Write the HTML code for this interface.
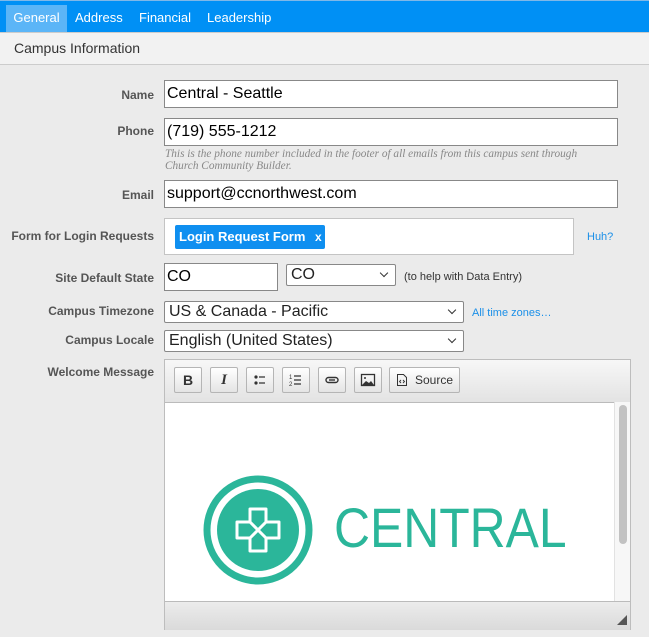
<!DOCTYPE html>
<html><head><style>
body{margin:0;width:649px;height:637px;background:#ebebeb;font-family:"Liberation Sans",Arial,sans-serif;position:relative;overflow:hidden}
.a{position:absolute}
.nav{left:0;top:0;width:649px;height:32px;background:#0090f5;border-top:1px solid #7fb8e8;box-sizing:border-box}
.tab{top:5px;height:27px;line-height:26px;color:#fff;font-size:13px}
.sub{left:0;top:32px;width:649px;height:33px;background:#f2f2f2;border-top:1px solid #ccc;border-bottom:1px solid #ccc;box-sizing:border-box;font-size:14px;color:#333;line-height:31px;padding-left:14px}
.lb{right:495px;font-size:12px;font-weight:bold;color:#555;text-align:right;white-space:nowrap}
.in{background:#fff;border:1px solid #888;box-sizing:border-box;font-size:16px;color:#000;padding-left:2px;line-height:25px}
.sel{background:#fff;border:1px solid #888;border-radius:2px;box-sizing:border-box;font-size:16px;color:#222;padding-left:4px;line-height:20px}
.sel:after{content:"";position:absolute;right:8px;top:5px;width:5px;height:5px;border-right:1.5px solid #333;border-bottom:1.5px solid #333;transform:rotate(45deg)}
.btn{top:367px;height:26px;width:28px;border:1px solid #b5b5b5;border-radius:2px;background:linear-gradient(#fff,#e4e4e4);box-sizing:border-box}
</style></head><body>
<div class="a nav"></div>
<div class="a tab" style="left:6px;width:61px;background:#5bb5f7;text-align:center">General</div>
<div class="a tab" style="left:75px">Address</div>
<div class="a tab" style="left:139px">Financial</div>
<div class="a tab" style="left:207px">Leadership</div>
<div class="a sub">Campus Information</div>

<div class="a lb" style="top:88px">Name</div>
<div class="a in" style="left:164px;top:80px;width:454px;height:28px">Central - Seattle</div>
<div class="a lb" style="top:124px">Phone</div>
<div class="a in" style="left:164px;top:118px;width:454px;height:28px">(719) 555-1212</div>
<div class="a" style="left:165px;top:148px;font-family:'Liberation Serif',serif;font-style:italic;font-size:11.3px;color:#888;line-height:12px;width:450px">This is the phone number included in the footer of all emails from this campus sent through<br>Church Community Builder.</div>
<div class="a lb" style="top:188px">Email</div>
<div class="a in" style="left:164px;top:180px;width:454px;height:28px">support@ccnorthwest.com</div>

<div class="a lb" style="top:229px">Form for Login Requests</div>
<div class="a" style="left:164px;top:218px;width:410px;height:37px;background:#fff;border:1px solid #c4c4c4;box-sizing:border-box"></div>
<div class="a" style="left:175px;top:225px;width:150px;height:24px;background:#0f8ff0;border-radius:2px;color:#fff;font-weight:bold;font-size:13px;line-height:23px;padding-left:4px;box-sizing:border-box">Login Request Form <span style="margin-left:6px;font-size:12px">x</span></div>
<div class="a" style="left:587px;top:231px;font-size:11px;color:#1a8fe8">Huh?</div>

<div class="a lb" style="top:271px">Site Default State</div>
<div class="a in" style="left:164px;top:263px;width:114px;height:28px">CO</div>
<div class="a sel" style="left:286px;top:264px;width:110px;height:22px">CO</div>
<div class="a" style="left:404px;top:271px;font-size:11px;color:#333">(to help with Data Entry)</div>

<div class="a lb" style="top:304px">Campus Timezone</div>
<div class="a sel" style="left:164px;top:301px;width:300px;height:22px">US &amp; Canada - Pacific</div>
<div class="a" style="left:472px;top:307px;font-size:11px;color:#1a8fe8">All time zones…</div>
<div class="a lb" style="top:333px">Campus Locale</div>
<div class="a sel" style="left:164px;top:330px;width:300px;height:22px">English (United States)</div>

<div class="a lb" style="top:365px">Welcome Message</div>
<div class="a" style="left:164px;top:359px;width:467px;height:271px;border:1px solid #bdbdbd;box-sizing:border-box;background:#fff"></div>
<div class="a" style="left:165px;top:360px;width:465px;height:42px;background:linear-gradient(#f7f7f7,#e3e3e3);border-bottom:1px solid #bbb"></div>
<div class="a btn" style="left:174px;font-weight:bold;font-size:14px;text-align:center;line-height:24px;color:#333">B</div>
<div class="a btn" style="left:210px;font-family:'Liberation Serif',serif;font-style:italic;font-weight:bold;font-size:15px;text-align:center;line-height:24px;color:#333">I</div>
<div class="a btn" style="left:246px"><svg width="26" height="24"><circle cx="9" cy="9" r="1.6" fill="#333"/><circle cx="9" cy="15" r="1.6" fill="#333"/><path d="M12 9h6M12 15h6" stroke="#333" stroke-width="1.3"/></svg></div>
<div class="a btn" style="left:282px"><svg width="26" height="24"><text x="6" y="11" font-size="6" fill="#333" font-family="Liberation Sans">1</text><text x="6" y="18" font-size="6" fill="#333" font-family="Liberation Sans">2</text><path d="M11 8h7M11 12h7M11 16h7" stroke="#333" stroke-width="1.2"/></svg></div>
<div class="a btn" style="left:318px"><svg width="26" height="24"><rect x="7" y="9.5" width="12" height="5" rx="2.5" fill="none" stroke="#333" stroke-width="1.4"/><path d="M10 12h6" stroke="#333" stroke-width="1.4"/></svg></div>
<div class="a btn" style="left:354px"><svg width="26" height="24"><rect x="6.5" y="6.5" width="13" height="11" fill="none" stroke="#333" stroke-width="1.3"/><path d="M7 17l4-4 3 2 2-2 3 4z" fill="#333"/><circle cx="10" cy="10" r="1" fill="#333"/></svg></div>
<div class="a btn" style="left:389px;width:71px;font-size:12px;color:#333;line-height:24px"><svg class="a" style="left:6px;top:5px" width="12" height="14"><path d="M1.5 1.5h6l3 3v8h-9z" fill="none" stroke="#333" stroke-width="1"/><path d="M5 7l-1.5 1.5L5 10M7 7l1.5 1.5L7 10" fill="none" stroke="#333" stroke-width=".9"/></svg><span style="margin-left:25px">Source</span></div>

<div class="a" style="left:614px;top:402px;width:15px;height:199px;background:#f7f7f7;border-left:1px solid #e2e2e2"></div>
<div class="a" style="left:619px;top:405px;width:8px;height:139px;background:#c2c2c2;border-radius:4px"></div>
<div class="a" style="left:165px;top:601px;width:465px;height:28px;background:linear-gradient(#ececec,#dadada);border-top:1px solid #bbb"></div>
<div class="a" style="left:617px;top:615px;width:0;height:0;border-left:10px solid transparent;border-bottom:10px solid #555"></div>

<svg class="a" style="left:200px;top:474px" width="120" height="115">
<circle cx="58" cy="56" r="51" fill="none" stroke="#2bb69a" stroke-width="7"/>
<circle cx="58" cy="56" r="41" fill="#2bb69a"/>
<path d="M50 35h16v13h13v16h-13v13h-16v-13h-13v-16h13z" fill="none" stroke="#fff" stroke-width="3" stroke-linejoin="round"/>
<path d="M50 48l16 16M66 48l-16 16" stroke="#fff" stroke-width="3"/>
</svg>
<div class="a" style="left:334px;top:496px;font-size:56px;color:#2bb69a;line-height:64px;transform:scaleX(0.89);transform-origin:0 0">CENTRAL</div>
</body></html>
